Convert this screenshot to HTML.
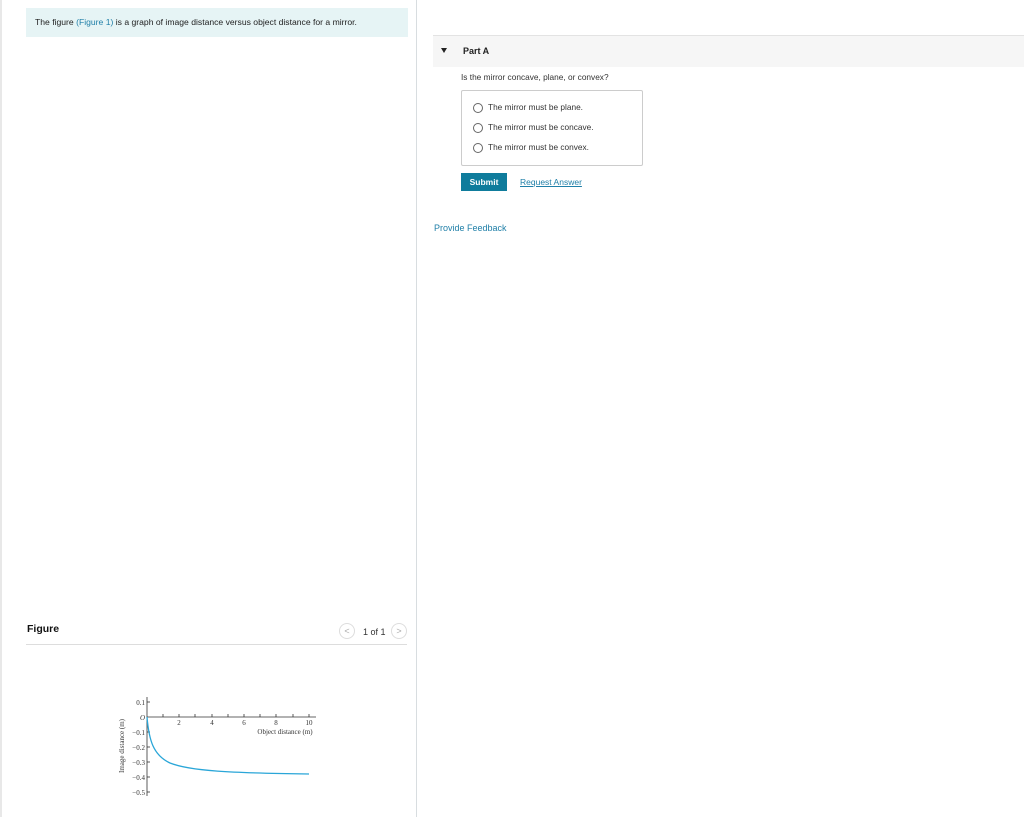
<!DOCTYPE html>
<html><head><style>
body{margin:0;width:1024px;height:817px;position:relative;background:#fff;font-family:"Liberation Sans",Arial,sans-serif;overflow:hidden}
.a{position:absolute}
.radio{position:absolute;left:473px;width:8px;height:8px;border:1px solid #666;border-radius:50%}
.opt{position:absolute;left:488px;font-size:8.3px;color:#333}
</style></head><body>
<div class="a" style="left:0;top:0;width:2px;height:817px;background:#e8e8e8"></div>
<div class="a" style="left:416px;top:0;width:1px;height:817px;background:#d8dde0"></div>
<div class="a" style="left:26px;top:8px;width:382px;height:29px;background:#e6f4f5"></div>
<div class="a" style="left:35px;top:17px;font-size:8.6px;color:#222">The figure <span style="color:#1f7fa8">(Figure 1)</span> is a graph of image distance versus object distance for a mirror.</div>

<div class="a" style="left:27px;top:623px;font-size:10.5px;font-weight:bold;color:#111">Figure</div>
<div class="a" style="left:26px;top:644px;width:381px;height:1px;background:#ddd"></div>
<div class="a" style="left:339px;top:623px;width:14px;height:14px;border:1px solid #ddd;border-radius:50%;font-size:9px;color:#aaa;text-align:center;line-height:14px">&lt;</div>
<div class="a" style="left:363px;top:627px;font-size:9px;color:#333">1 of 1</div>
<div class="a" style="left:391px;top:623px;width:14px;height:14px;border:1px solid #ddd;border-radius:50%;font-size:9px;color:#aaa;text-align:center;line-height:14px">&gt;</div>

<svg class="a" style="left:0;top:0" width="416" height="817">
<g stroke="#333" stroke-width="0.8" fill="none">
<line x1="147" y1="697" x2="147" y2="796"/>
<line x1="147" y1="717" x2="316" y2="717"/>
<line x1="147" y1="702" x2="150" y2="702"/><line x1="147" y1="732" x2="150" y2="732"/><line x1="147" y1="747" x2="150" y2="747"/><line x1="147" y1="762" x2="150" y2="762"/><line x1="147" y1="777" x2="150" y2="777"/><line x1="147" y1="792" x2="150" y2="792"/>
<line x1="163" y1="714" x2="163" y2="717"/><line x1="179" y1="714" x2="179" y2="717"/><line x1="195" y1="714" x2="195" y2="717"/><line x1="212" y1="714" x2="212" y2="717"/><line x1="228" y1="714" x2="228" y2="717"/><line x1="244" y1="714" x2="244" y2="717"/><line x1="260" y1="714" x2="260" y2="717"/><line x1="276" y1="714" x2="276" y2="717"/><line x1="293" y1="714" x2="293" y2="717"/><line x1="309" y1="714" x2="309" y2="717"/>
</g>
<path d="M147 717 C149 740 153 755 170 763 C190 771 230 773 309 774" stroke="#2aa6d8" stroke-width="1.3" fill="none"/>
<g font-family="Liberation Serif,serif" font-size="7" fill="#333" text-anchor="end">
<text x="145" y="705">0.1</text><text x="145" y="720" font-style="italic">O</text><text x="145" y="735">−0.1</text><text x="145" y="750">−0.2</text><text x="145" y="765">−0.3</text><text x="145" y="780">−0.4</text><text x="145" y="795">−0.5</text>
</g>
<g font-family="Liberation Serif,serif" font-size="7" fill="#333" text-anchor="middle">
<text x="179" y="725">2</text><text x="212" y="725">4</text><text x="244" y="725">6</text><text x="276" y="725">8</text><text x="309" y="725">10</text>
<text x="285" y="734">Object distance (m)</text>
<text transform="translate(124,746) rotate(-90)">Image distance (m)</text>
</g>
</svg>

<div class="a" style="left:433px;top:35px;width:591px;height:31px;background:#f6f6f6;border-top:1px solid #e3e3e3"></div>
<div class="a" style="left:441px;top:48px;width:0;height:0;border-left:3.5px solid transparent;border-right:3.5px solid transparent;border-top:5px solid #222"></div>
<div class="a" style="left:463px;top:46px;font-size:9px;font-weight:bold;color:#222">Part A</div>
<div class="a" style="left:461px;top:72px;font-size:8.3px;color:#333">Is the mirror concave, plane, or convex?</div>
<div class="a" style="left:461px;top:90px;width:180px;height:74px;border:1px solid #ccc;border-radius:2px"></div>
<div class="radio" style="top:103px"></div><div class="opt" style="top:102px">The mirror must be plane.</div>
<div class="radio" style="top:123px"></div><div class="opt" style="top:122px">The mirror must be concave.</div>
<div class="radio" style="top:143px"></div><div class="opt" style="top:142px">The mirror must be convex.</div>
<div class="a" style="left:461px;top:173px;width:46px;height:18px;background:#0f7c9c;color:#fff;font-size:8.5px;font-weight:bold;text-align:center;line-height:18px">Submit</div>
<div class="a" style="left:520px;top:177px;font-size:8.5px;color:#1f7fa8;text-decoration:underline">Request Answer</div>
<div class="a" style="left:434px;top:223px;font-size:9px;color:#1f7fa8">Provide Feedback</div>
</body></html>
